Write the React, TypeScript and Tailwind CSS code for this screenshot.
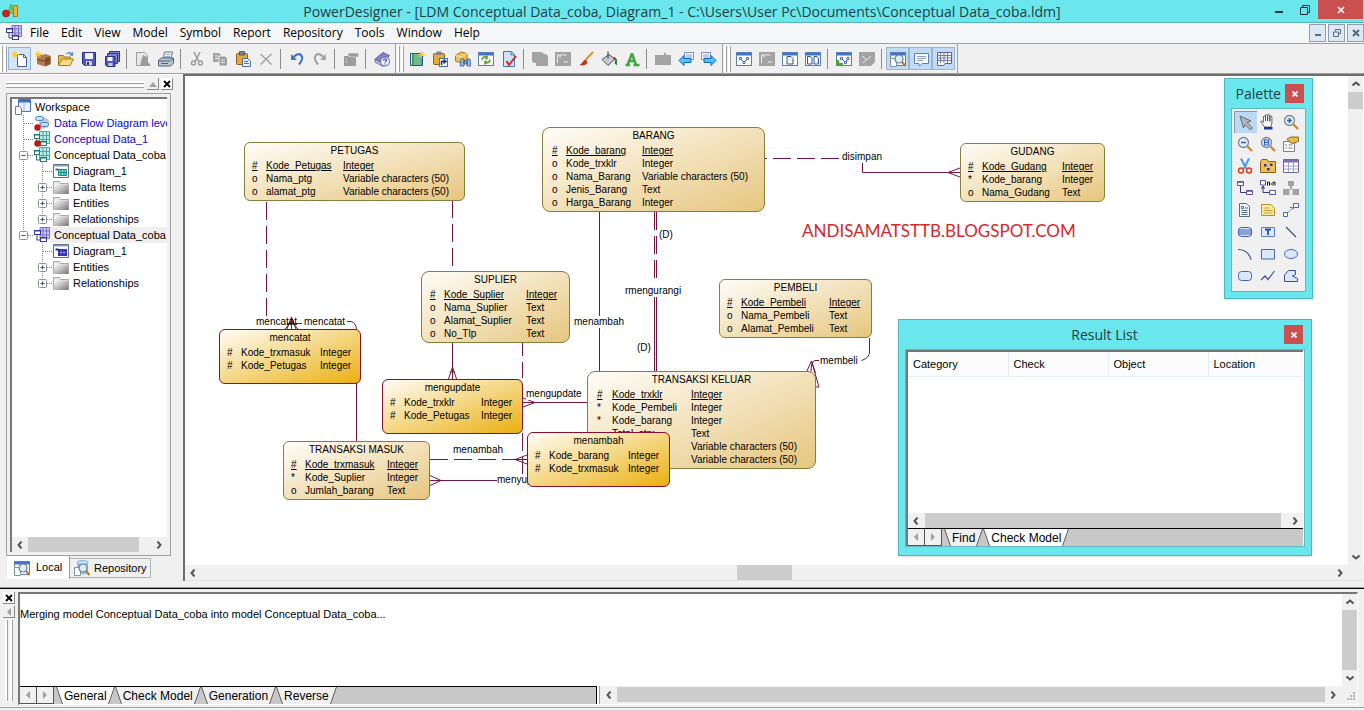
import clsx from 'clsx';
import type { ReactNode } from 'react';

interface IconProps {
  children: ReactNode;
  className?: string;
}

function Icon({ children, className }: IconProps) {
  return (
    <svg viewBox="0 0 16 16" className={clsx('size-4 shrink-0', className)} fill="none" aria-hidden="true">
      {children}
    </svg>
  );
}

/* Shared parts of the icons */

const spark = <path d="M3 0v7M0 3.500h7M.5 1l5 5M5.500 1l-5 5" stroke="#f5c431" strokeWidth="1" />;
const lens = (
  <>
    <circle cx="9" cy="8" r="4" fill="#d8ecfb" stroke="#6b7c8f" strokeWidth="1.200" />
    <path d="M12 11l3.500 4" stroke="#b5792a" strokeWidth="2.200" />
  </>
);
const windowFrame = (
  <>
    <rect x=".5" y="1.500" width="15" height="13" fill="#fff" stroke="#5b7fb5" />
    <rect x="1" y="2" width="14" height="2.500" fill="#3f74c9" />
  </>
);

const icons: Record<string, ReactNode> = {
  app: (
    <>
      <path d="M9 1l3 9H6z" fill="#7cc653" stroke="#4c8f2b" strokeWidth=".6" />
      <rect x="11.500" y="2.500" width="4" height="11" fill="#f0b32a" stroke="#a06d10" strokeWidth=".8" />
      <circle cx="4" cy="10.500" r="3.500" fill="#d6201c" stroke="#7c0c0c" strokeWidth=".6" />
    </>
  ),
  model: (
    <>
      <path d="M6 .5h9.500v11H6zM6 4h9.500M6 8h9.500M9 .5v11M12.500 .5v11" stroke="#7a72c8" fill="#c9c6f0" />
      <rect x=".5" y="3.500" width="6" height="4" fill="#fff" stroke="#3b349a" />
      <rect x="6.500" y="10.500" width="6" height="4" fill="#fff" stroke="#3b349a" />
      <path d="M1 4h5M7 11h5M3 8v5h3" stroke="#3b349a" />
    </>
  ),
  new: (
    <>
      <path d="M5.500 3.500h6l3 3v9h-9z" fill="#fff" stroke="#46607f" />
      <path d="M11.500 3.500v3h3" stroke="#46607f" />
      {spark}
    </>
  ),
  briefcase: (
    <>
      <path d="M2 5l9-2 4.500 2v8L10 15.500 2 13z" fill="#b07a50" />
      <path d="M10 7l5.500-2v8L10 15.500z" fill="#8b5230" />
      <path d="M2 8.500l8 1.500 5.500-2" stroke="#6e3d20" />
      {spark}
    </>
  ),
  open: (
    <>
      <path d="M.5 14V4.500h5l1 1.500h6v2" fill="#e9b64a" stroke="#a77a1c" />
      <path d="M.5 14.500L4 8h11.500l-3.500 6.500z" fill="#fbdc85" stroke="#a77a1c" />
      <path d="M8.500 3c2-2 4.500-2 5.500 1M14.800 1.500L14.200 4.500l-2.500-1" stroke="#4a7fc1" strokeWidth="1.200" />
    </>
  ),
  save: (
    <>
      <path d="M1.500 1.500h13v13h-11l-2-2z" fill="#5157b8" stroke="#2d3284" />
      <path d="M4 2h8v6H4z" fill="#eef2fb" />
      <path d="M5 10h6v4.500H5z" fill="#c8d0ea" />
      <path d="M6 11h2v3H6z" fill="#2d3284" />
    </>
  ),
  saveAll: (
    <>
      <path d="M5.500 .5h10v10h-10z" fill="#7f84cf" stroke="#2d3284" />
      <path d="M3.500 2.500h10v10h-10z" fill="#7f84cf" stroke="#2d3284" />
      <path d="M1.500 5.500h9.500v10h-8l-1.500-1.500z" fill="#5157b8" stroke="#2d3284" />
      <path d="M3.500 6h5v4h-5z" fill="#eef2fb" />
      <path d="M4.500 12h4v3h-4z" fill="#c8d0ea" />
    </>
  ),
  preview: (
    <>
      <path d="M1.500 1.500h8l3 3v10h-11z" fill="#e9e9e9" stroke="#9c9c9c" />
      <path d="M8 4l4 2 1 5 3 4H5l1-5z" fill="#9c9c9c" />
    </>
  ),
  print: (
    <>
      <path d="M5.500 7l1-6h8l-1.500 6z" fill="#fff" stroke="#5b6f88" />
      <path d="M7.500 3.500h5M7 5.500h5" stroke="#93a8c2" />
      <path d="M.5 9.500L3.500 7h12v5l-3 3h-12z" fill="#b9c9dc" stroke="#4f6077" />
      <path d="M1 10h11.500l3-2.500M3 12.500h7" stroke="#4f6077" />
    </>
  ),
  cut: (
    <>
      <path d="M5 1l4.500 9M11 1L6.500 10" stroke="#9c9c9c" strokeWidth="1.600" />
      <circle cx="4.500" cy="12" r="2" stroke="#9c9c9c" strokeWidth="1.400" />
      <circle cx="11.500" cy="12" r="2" stroke="#9c9c9c" strokeWidth="1.400" />
    </>
  ),
  copy: (
    <>
      <path d="M1 2h6l2 2v7H1z" fill="#a3a3a3" />
      <path d="M7 5h6l2.500 2.500V15H7z" fill="#9c9c9c" stroke="#f0f0f0" />
      <path d="M3 5h3M3 7.500h3M9 9h4M9 11.500h4" stroke="#eee" />
    </>
  ),
  paste: (
    <>
      <rect x="1.500" y="2.500" width="11" height="11" rx="1" fill="#e4a93a" stroke="#8a5f16" />
      <rect x="4.500" y=".5" width="5" height="3.500" fill="#7d828c" stroke="#4d525c" strokeWidth=".8" />
      <path d="M7.500 7.500h5l3 2.500v5.500h-8z" fill="#e9f1fc" stroke="#4f6f9e" />
      <path d="M9 10.500h4M9 12.500h5" stroke="#4f6f9e" />
    </>
  ),
  remove: <path d="M2.500 3l11 10.500M13.500 3l-11 10.500" stroke="#a3a3a3" strokeWidth="1.500" />,
  undo: (
    <>
      <path d="M2 3v6h6z" fill="#3c76d0" />
      <path d="M4 7c2-3.500 6-5 8-3s1 6-2 9.500" stroke="#3c76d0" strokeWidth="2.200" />
    </>
  ),
  redo: (
    <>
      <path d="M14 3v6H8z" fill="#a3a3a3" />
      <path d="M12 7c-2-3.500-6-5-8-3s-1 6 2 9.500" stroke="#a3a3a3" strokeWidth="2.200" />
    </>
  ),
  properties: (
    <>
      <path d="M1 5h12v10H1z" fill="#9c9c9c" />
      <path d="M5 2h10.500v4H9L5 5z" fill="#9c9c9c" stroke="#f0f0f0" strokeWidth=".6" />
      <path d="M3 8h1M3 11h1" stroke="#eee" />
    </>
  ),
  help: (
    <>
      <path d="M1 8l8-6.500 6.500 3L9 13z" fill="#8b7fc6" stroke="#5a4c9c" strokeWidth=".8" />
      <path d="M1 8v3l8 4.500V13z" fill="#c9c3e8" stroke="#5a4c9c" strokeWidth=".8" />
      <circle cx="11" cy="10.500" r="4.500" fill="#f1f5fd" stroke="#4a68a8" />
      <path d="M9.500 9.500c0-2 3-2 3-.2 0 1.200-1.500 1-1.500 2.200M11 12.500v1" stroke="#2a4c9c" strokeWidth="1.200" />
    </>
  ),
  newDiagram: (
    <>
      <path d="M1.500 2.500h12v12h-12z" fill="#3c9150" stroke="#275c8a" />
      <path d="M4.500 3h8v11h-8z" fill="#6fb98a" />
      <path d="M2.500 3v11" stroke="#d8ecf5" />
      <path d="M12.500 0v7M9 3.500h7M10 1l5 5M15 1l-5 5" stroke="#f5c431" />
    </>
  ),
  pasteLink: (
    <>
      <rect x="1.500" y="2.500" width="11" height="11" rx="1" fill="#e4a93a" stroke="#8a5f16" />
      <rect x="4.500" y=".5" width="5" height="3.500" fill="#7d828c" />
      <rect x="7.500" y="7.500" width="8" height="8" fill="#e9f1fc" stroke="#4f6f9e" />
      <path d="M9.500 14v-3.500h4M11.500 8.500l2.500 2-2.500 2" stroke="#1c2e7a" strokeWidth="1.400" />
    </>
  ),
  find: (
    <>
      <path d="M.5 4.500L6 1l6 1.500v6L6 12 .5 10z" fill="#f1bf55" stroke="#a9781d" />
      <path d="M.5 4.500L6 6l6-3.500" stroke="#fff2c4" />
      <path d="M6 8h3v7H5zM12 8h3l1 7h-4zM9 10h3v3H9z" fill="#8fb6e8" stroke="#2a4c86" strokeWidth=".7" />
    </>
  ),
  refresh: (
    <>
      {windowFrame}
      <path d="M4 9c0-3 3-4 5-3M9 4.500v3h-2M12 8.500c0 3-3 4-5 3M7 13.500v-3h2" stroke="#4fa11f" strokeWidth="1.500" />
    </>
  ),
  check: (
    <>
      <path d="M2.500 .5h8l3 3v12h-11z" fill="#cfe2f8" stroke="#4b74ad" />
      <path d="M10 1v3h3" stroke="#4b74ad" />
      <path d="M5.500 10l2.500 4 7-9" stroke="#d22a1f" strokeWidth="2" />
    </>
  ),
  grayStack: <path d="M0 1h10l2 2h2l2 2v10H4v-3H2l-2-2z" fill="#a3a3a3" />,
  grayFrame: (
    <>
      <path d="M0 1h16v14H0z" fill="#a3a3a3" />
      <path d="M2.500 12V4h9M5 4v3M10 10v2M12 10v2" stroke="#eee" />
    </>
  ),
  brush: (
    <>
      <path d="M15 1L7 9.500" stroke="#e2912a" strokeWidth="2" />
      <path d="M8 9c-3-.5-3 3-6.500 5 4 1 7.500 0 8-3z" fill="#b4391c" />
    </>
  ),
  bucket: (
    <>
      <path d="M1 8.500l7-5 6 4.500-7 6.500z" fill="#c3c7ce" stroke="#545a64" />
      <path d="M7 .5v7" stroke="#333" />
      <path d="M12 7c3 0 3.500 3 2.500 6" stroke="#c42a1c" strokeWidth="1.800" />
      <path d="M15.300 8c.6 2 .6 4 0 6" stroke="#2f8f3c" strokeWidth="1.200" />
    </>
  ),
  font: (
    <path d="M8 2.500L3.500 14M8 2.500l4 11.500M5 10h6M1.500 14h4.500M9.500 14h6" stroke="#3fa63a" strokeWidth="2.400" />
  ),
  grayNote: <path d="M0 4h9V1l3 3h4v10H0z" fill="#a3a3a3" />,
  back: (
    <>
      <rect x="6.500" y="1.500" width="9" height="7" fill="#fff" stroke="#7d92c4" />
      <path d="M8 4h6M8 6h6" stroke="#7d92c4" />
      <path d="M1 9.500l5-5v3h7v4H6v3z" fill="#4fc3f5" stroke="#1662b8" />
    </>
  ),
  forward: (
    <>
      <rect x=".5" y="1.500" width="9" height="7" fill="#fff" stroke="#7d92c4" />
      <path d="M2 4h6M2 6h6" stroke="#7d92c4" />
      <path d="M15 9.500l-5-5v3H3v4h7v3z" fill="#4fc3f5" stroke="#1662b8" />
    </>
  ),
  tree: (
    <>
      {windowFrame}
      <path d="M4.500 7.500l3.500 4M11.500 7.500L8 11.500" stroke="#2d4fa8" />
      <path d="M3.500 6.500h2v2h-2zM10.500 6.500h2v2h-2zM7 10.500h2v2H7z" fill="#fff" stroke="#4468c9" />
    </>
  ),
  page: (
    <>
      {windowFrame}
      <path d="M5 5.500h4l2 2V13H5z" fill="#f4f8ff" stroke="#34568f" />
    </>
  ),
  pages: (
    <>
      {windowFrame}
      <path d="M2.500 5.500h3l1.500 2V13H2.500zM9 5.500h3l1.500 2V13H9z" fill="#f4f8ff" stroke="#34568f" />
    </>
  ),
  addView: (
    <>
      {windowFrame}
      <path d="M5.500 7.500l4 4M12 7.500l-2.500 4" stroke="#2d4fa8" />
      <path d="M4.500 6.500h2v2h-2zM11 6.500h2v2h-2zM8.500 10.500h2v2h-2z" fill="#fff" stroke="#4468c9" />
      <path d="M0 9h3v3h4v3H3l-3-2z" fill="#45a82d" />
    </>
  ),
  grayView: (
    <>
      <path d="M0 1h16v10l-4 4H0z" fill="#a3a3a3" />
      <path d="M3 5l5 4 4-4M4 12l3-3" stroke="#eee" />
    </>
  ),
  browser: (
    <>
      {windowFrame}
      <path d="M.5 7.500h4l2 2v6h-6z" fill="#fff" stroke="#7d92a8" />
      {lens}
    </>
  ),
  output: (
    <>
      <path d="M1.500 2.500h14v10H9l-1.500 2H6v-2H1.500z" fill="#f7fafe" stroke="#5b7fb5" />
      <path d="M4 5.500h9M4 7.500h9M4 9.500h6" stroke="#8ba0cc" />
    </>
  ),
  results: (
    <>
      <path d="M1.500 1.500h14v11H9l-1.500 2H1.500z" fill="#fff" stroke="#5b5f9c" />
      <path d="M1 4.500h14M1 7h14M1 9.500h14M4.500 2v10M8 2v10M11.500 2v10" stroke="#7378b8" />
    </>
  ),
  pointer: <path d="M2 1l11 5-4 1.500 5.500 5.500-2 2L7 9.500 5.500 13z" fill="#b4b8be" stroke="#666b73" />,
  hand: (
    <>
      <path d="M4.500 13L1 8c-.5-1.500 1-1.500 2.500.5V3c0-1.500 2-1.500 2 0v4V1.500c0-1.500 2.200-1.500 2.200 0V7 1.800c0-1.500 2.200-1.500 2.200 0V7.500 3c0-1.500 2-1.500 2 0v6l-1 4z" fill="#fff" stroke="#444" strokeWidth=".8" />
      <path d="M4 13h8.500v2.500H4z" fill="#1537a8" />
    </>
  ),
  zoomIn: (
    <>
      <circle cx="6.500" cy="6.500" r="5" fill="#e3eefb" stroke="#7b8797" strokeWidth="1.300" />
      <path d="M10.500 10.500l4.500 4.500" stroke="#c68b2e" strokeWidth="2.400" />
      <path d="M4 6.500h5M6.500 4v5" stroke="#3b5f9e" strokeWidth="1.600" />
    </>
  ),
  zoomOut: (
    <>
      <circle cx="6.500" cy="6.500" r="5" fill="#e3eefb" stroke="#7b8797" strokeWidth="1.300" />
      <path d="M10.500 10.500l4.500 4.500" stroke="#c68b2e" strokeWidth="2.400" />
      <path d="M4 6.500h5" stroke="#3b5f9e" strokeWidth="1.600" />
    </>
  ),
  zoomFit: (
    <>
      <circle cx="6.500" cy="6.500" r="5" fill="#e3eefb" stroke="#7b8797" strokeWidth="1.300" />
      <path d="M10.500 10.500l4.500 4.500" stroke="#c68b2e" strokeWidth="2.400" />
      <path d="M4.500 4h4v5h-4zM4.500 6.500h4" stroke="#2b5fc4" strokeWidth="1.200" />
    </>
  ),
  propSheet: (
    <>
      <path d="M.5 5.500h11v10H.5z" fill="#fff" stroke="#7a7f87" />
      <path d="M2 9h2M2 12h2M5.500 9h4M5.500 12h4" stroke="#7a7f87" />
      <path d="M4 3l4-2h7.500v4.500L9 7.500l-3-2z" fill="#e7bd3f" stroke="#6d5412" strokeWidth=".8" />
    </>
  ),
  scissors: (
    <>
      <path d="M4 .5l5 10M12 .5l-5 10" stroke="#3f9de0" strokeWidth="2" />
      <circle cx="4" cy="12.500" r="2.500" stroke="#d8401f" strokeWidth="1.500" />
      <circle cx="12" cy="12.500" r="2.500" stroke="#d8401f" strokeWidth="1.500" />
    </>
  ),
  package: (
    <>
      <path d="M.5 3.500L2 1.500h5l1.500 2h7v11H.5z" fill="#f2bc57" stroke="#8a6013" />
      <path d="M4 6h2.500v2.500H4zM10 5.500h2.500V8H10zM7 10h2.500v2.500H7z" fill="#24408f" />
    </>
  ),
  entity: (
    <>
      <path d="M.5 1.500h15v13H.5z" fill="#fff" stroke="#6a6a98" />
      <path d="M1 2h14v2.500H1z" fill="#7d6cb8" />
      <path d="M1 8h14M1 11h14M5.500 4v10M10.500 4v10" stroke="#9aa4cc" />
    </>
  ),
  relationship: (
    <>
      <path d="M3.500 6v6.500H10" stroke="#333a78" />
      <path d="M.5 1.500h6v4h-6zM9.500 10.500h6v4h-6z" fill="#fff" stroke="#5b4fa8" />
      <path d="M1 2h5M10 11h5" stroke="#5b4fa8" strokeWidth="1.500" />
    </>
  ),
  manyToMany: (
    <>
      <path d="M3 6v6.500h7M1.500 9L3 6l1.500 3" stroke="#333a78" />
      <path d="M.5 .5h5v4.500h-5zM9.500 10.500h6v4h-6z" fill="#fff" stroke="#5b4fa8" />
      <path d="M7.500 5.500V2.200h2v3.300M10.500 4h1.500M13 5.500V2.200h2v3.300" stroke="#111" />
    </>
  ),
  inheritance: <path d="M5 1h6v5H9v3h7v6H9.500V9.500h-3V15H0V9h7V6H5z" fill="#a3a3a3" />,
  file: (
    <>
      <path d="M2.500 1.500h7l3 3v10h-10z" fill="#eef3fb" stroke="#5a6b85" />
      <path d="M4.500 4.500h2v2h-2zM8 6h3M4.500 8.500h6M4.500 10.500h6M4.500 12.500h6" stroke="#5a6b85" />
    </>
  ),
  note: (
    <>
      <path d="M1.500 2.500h9l4 4v7h-13z" fill="#fff0a8" stroke="#b8912a" />
      <path d="M3.500 6h6M3.500 8.500h9M3.500 11h9" stroke="#c59b2d" />
    </>
  ),
  link: (
    <>
      <path d="M.5 10.500h4v4h-4zM10.500 1.500h5v4h-5z" fill="#fff" stroke="#4466b0" />
      <path d="M5 10.500l5-5M7 5.500h3v3" stroke="#4466b0" strokeDasharray="2 1" />
    </>
  ),
  title: (
    <>
      <rect x="1.500" y="3.500" width="13" height="9" rx="3" fill="#dbe8fb" stroke="#3a5ba8" />
      <path d="M1 6h14M1 8h14M1 10h14" stroke="#3a5ba8" />
    </>
  ),
  textBox: (
    <>
      <path d="M1.500 3.500h13v9h-13z" fill="#dbe8fb" stroke="#5a7fc4" />
      <path d="M5 5.500h6M8 5.500v5.500" stroke="#2a4fa0" strokeWidth="1.800" />
    </>
  ),
  line: <path d="M3 3l10 10" stroke="#3a4f9c" strokeWidth="1.200" />,
  arc: <path d="M1 3.500c7 0 11 3 13 10" stroke="#3a4f8c" strokeWidth="1.200" />,
  rect: <path d="M1.500 3.500h13v9.500h-13z" fill="#dbe8fb" stroke="#4466b0" />,
  ellipse: <ellipse cx="8" cy="8" rx="6.500" ry="4.500" fill="#dbe8fb" stroke="#4466b0" />,
  rounded: <rect x="1.500" y="3.500" width="13" height="9" rx="3" fill="#dbe8fb" stroke="#4466b0" />,
  polyline: <path d="M1 12l4-4 3 3.500L14.500 3" stroke="#3a4f8c" strokeWidth="1.200" />,
  polygon: <path d="M1.500 13.500V7l4-4.500h7v4L9.500 8l5 2.500v3z" fill="#dbe8fb" stroke="#3a5090" />,
  workspace: (
    <>
      <path d="M3.500 .5h12v12h-12z" fill="#e9f1fd" stroke="#3f6fc0" />
      <path d="M4 1h11v2.500H4z" fill="#3f6fc0" />
      <path d="M9 3.500v9" stroke="#9bb7e4" />
      <path d="M.5 7.500h4l2 2v6h-6z" fill="#fff" stroke="#6c7f98" />
    </>
  ),
  flowModel: (
    <>
      <circle cx="10" cy="8" r="5.500" fill="#c3c8cf" />
      <rect x="1.500" y="1.500" width="8" height="4" rx="2" fill="#bfe0fa" stroke="#4a86c0" />
      <rect x="6.500" y="7.500" width="8" height="4" rx="2" fill="#bfe0fa" stroke="#4a86c0" />
      <circle cx="3.500" cy="12.500" r="3.200" fill="#c9100f" />
    </>
  ),
  conceptual: (
    <>
      <path d="M5.500 .5h10v12h-10zM5.500 4.500h10M5.500 8.500h10M9 .5v12M12.500 .5v12" stroke="#4aa8a0" fill="#b8efe8" />
      <rect x=".5" y="3.500" width="5" height="4" fill="#fff" stroke="#25786f" />
      <rect x="6.500" y="10.500" width="6" height="4" fill="#fff" stroke="#25786f" />
      <path d="M1 4h4M7 11h5M2.500 8v5h4" stroke="#25786f" />
    </>
  ),
  diagramTeal: (
    <>
      <path d="M.5 1.500h15v13H.5z" fill="#fff" stroke="#5b6f88" />
      <path d="M1 2h14v1.500H1z" fill="#8aa3c0" />
      <path d="M5.500 6.500h8v6h-8zM5.500 9.500h8M8 6.500v6M11 6.500v6" stroke="#19877c" fill="#7fe0d6" />
      <path d="M2.500 5.500h3v2h-3z" fill="#19877c" />
    </>
  ),
  diagramBlue: (
    <>
      <path d="M.5 1.500h15v13H.5z" fill="#fff" stroke="#5b6f88" />
      <path d="M1 2h14v1.500H1z" fill="#8aa3c0" />
      <path d="M5.500 6.500h8v6h-8z" fill="#2522a8" stroke="#2522a8" />
      <path d="M5.500 9.500h8M8 6.500v6M11 6.500v6" stroke="#a5a3f0" strokeWidth=".7" />
      <path d="M2.500 5.500h3v2h-3z" fill="#2522a8" />
    </>
  ),
  folder: (
    <>
      <defs>
        <linearGradient id="folderFill" x1="0" y1="0" x2="1" y2="1">
          <stop offset="0" stopColor="#fff" />
          <stop offset="1" stopColor="#777" />
        </linearGradient>
      </defs>
      <path d="M.5 2.500h6l1 2h8v10H.5z" fill="#e8e8e8" stroke="#aaa" />
      <path d="M1 5.500h14.500V15H1z" fill="url(#folderFill)" />
    </>
  ),
  database: (
    <>
      <path d="M3 2.500v10c0 2.500 11 2.500 11 0v-10z" fill="#8cc4ee" />
      <ellipse cx="8.500" cy="2.500" rx="5.500" ry="2" fill="#c4e3f8" stroke="#4a8fc8" strokeWidth=".6" />
      <path d="M.5 7.500h4l2 2v6h-6z" fill="#fff" stroke="#7d92a8" />
      {lens}
    </>
  ),
};

icons.conceptualLocked = (
  <>
    {icons.conceptual}
    <circle cx="3.500" cy="12.500" r="3.200" fill="#c9100f" />
  </>
);

interface ToolItem {
  icon: string;
  label: string;
  active?: 'hover' | 'pressed';
}

const toolbars: ToolItem[][][] = [
  [
    [
      { icon: 'new', label: 'New', active: 'hover' },
      { icon: 'briefcase', label: 'New project' },
      { icon: 'open', label: 'Open' },
      { icon: 'save', label: 'Save' },
      { icon: 'saveAll', label: 'Save all' },
    ],
    [
      { icon: 'preview', label: 'Print preview' },
      { icon: 'print', label: 'Print' },
    ],
    [
      { icon: 'cut', label: 'Cut' },
      { icon: 'copy', label: 'Copy' },
      { icon: 'paste', label: 'Paste' },
      { icon: 'remove', label: 'Delete' },
    ],
    [
      { icon: 'undo', label: 'Undo' },
      { icon: 'redo', label: 'Redo' },
    ],
    [{ icon: 'properties', label: 'Properties' }],
    [{ icon: 'help', label: 'Help topics' }],
  ],
  [
    [
      { icon: 'newDiagram', label: 'New diagram' },
      { icon: 'pasteLink', label: 'Paste as shortcut' },
      { icon: 'find', label: 'Find objects' },
      { icon: 'refresh', label: 'Refresh' },
      { icon: 'check', label: 'Run check' },
    ],
    [
      { icon: 'grayStack', label: 'Group' },
      { icon: 'grayFrame', label: 'Ungroup' },
      { icon: 'brush', label: 'Line style' },
      { icon: 'bucket', label: 'Fill' },
      { icon: 'font', label: 'Font' },
    ],
    [
      { icon: 'grayNote', label: 'Up one level' },
      { icon: 'back', label: 'Previous diagram' },
      { icon: 'forward', label: 'Next diagram' },
    ],
  ],
  [
    [
      { icon: 'tree', label: 'Global view' },
      { icon: 'grayFrame', label: 'Selection view' },
      { icon: 'page', label: 'Page view' },
      { icon: 'pages', label: 'Used pages' },
    ],
    [
      { icon: 'addView', label: 'Add view' },
      { icon: 'grayView', label: 'Previous view' },
    ],
    [
      { icon: 'browser', label: 'Browser', active: 'pressed' },
      { icon: 'output', label: 'Output', active: 'pressed' },
      { icon: 'results', label: 'Result list', active: 'pressed' },
    ],
  ],
];

const paletteTools = [
  'pointer', 'hand', 'zoomIn',
  'zoomOut', 'zoomFit', 'propSheet',
  'scissors', 'package', 'entity',
  'relationship', 'manyToMany', 'inheritance',
  'file', 'note', 'link',
  'title', 'textBox', 'line',
  'arc', 'rect', 'ellipse',
  'rounded', 'polyline', 'polygon',
];

const menus = ['File', 'Edit', 'View', 'Model', 'Symbol', 'Report', 'Repository', 'Tools', 'Window', 'Help'];

interface TreeItem {
  label: string;
  icon: string;
  depth: number;
  expander?: 'plus' | 'minus';
  last?: boolean;
  parentLine?: boolean;
  blue?: boolean;
  selected?: boolean;
}

const treeItems: TreeItem[] = [
  { label: 'Workspace', icon: 'workspace', depth: 0 },
  { label: 'Data Flow Diagram leve', icon: 'flowModel', depth: 1, blue: true },
  { label: 'Conceptual Data_1', icon: 'conceptualLocked', depth: 1, blue: true },
  { label: 'Conceptual Data_coba', icon: 'conceptual', depth: 1, expander: 'minus' },
  { label: 'Diagram_1', icon: 'diagramTeal', depth: 2, parentLine: true },
  { label: 'Data Items', icon: 'folder', depth: 2, expander: 'plus', parentLine: true },
  { label: 'Entities', icon: 'folder', depth: 2, expander: 'plus', parentLine: true },
  { label: 'Relationships', icon: 'folder', depth: 2, expander: 'plus', parentLine: true, last: true },
  { label: 'Conceptual Data_coba', icon: 'model', depth: 1, expander: 'minus', last: true, selected: true },
  { label: 'Diagram_1', icon: 'diagramBlue', depth: 2 },
  { label: 'Entities', icon: 'folder', depth: 2, expander: 'plus' },
  { label: 'Relationships', icon: 'folder', depth: 2, expander: 'plus', last: true },
];

interface EntityData {
  name: string;
  place: string;
  columns: string;
  association?: boolean;
  rows: [string, string, string][];
}

const entities: EntityData[] = [
  {
    name: 'PETUGAS',
    place: 'left-[59px] top-[66px] w-[221px] rounded-md',
    columns: 'pl-[7px] grid-cols-[14px_77px_auto]',
    rows: [
      ['#', 'Kode_Petugas', 'Integer'],
      ['o', 'Nama_ptg', 'Variable characters (50)'],
      ['o', 'alamat_ptg', 'Variable characters (50)'],
    ],
  },
  {
    name: 'BARANG',
    place: 'left-[357px] top-[51px] w-[223px] rounded-lg',
    columns: 'pl-[9px] grid-cols-[14px_76px_auto]',
    rows: [
      ['#', 'Kode_barang', 'Integer'],
      ['o', 'Kode_trxklr', 'Integer'],
      ['o', 'Nama_Barang', 'Variable characters (50)'],
      ['o', 'Jenis_Barang', 'Text'],
      ['o', 'Harga_Barang', 'Integer'],
    ],
  },
  {
    name: 'GUDANG',
    place: 'left-[775px] top-[67px] w-[145px] rounded-md',
    columns: 'pl-[7px] grid-cols-[14px_80px_auto]',
    rows: [
      ['#', 'Kode_Gudang', 'Integer'],
      ['*', 'Kode_barang', 'Integer'],
      ['o', 'Nama_Gudang', 'Text'],
    ],
  },
  {
    name: 'SUPLIER',
    place: 'left-[236px] top-[195px] w-[149px] rounded-lg',
    columns: 'pl-2 grid-cols-[14px_82px_auto]',
    rows: [
      ['#', 'Kode_Suplier', 'Integer'],
      ['o', 'Nama_Suplier', 'Text'],
      ['o', 'Alamat_Suplier', 'Text'],
      ['o', 'No_Tlp', 'Text'],
    ],
  },
  {
    name: 'PEMBELI',
    place: 'left-[534px] top-[203px] w-[153px] rounded-md',
    columns: 'pl-[7px] grid-cols-[14px_88px_auto]',
    rows: [
      ['#', 'Kode_Pembeli', 'Integer'],
      ['o', 'Nama_Pembeli', 'Text'],
      ['o', 'Alamat_Pembeli', 'Text'],
    ],
  },
  {
    name: 'TRANSAKSI MASUK',
    place: 'left-[98px] top-[365px] w-[147px] rounded-md',
    columns: 'pl-[7px] grid-cols-[14px_82px_auto]',
    rows: [
      ['#', 'Kode_trxmasuk', 'Integer'],
      ['*', 'Kode_Suplier', 'Integer'],
      ['o', 'Jumlah_barang', 'Text'],
    ],
  },
  {
    name: 'TRANSAKSI KELUAR',
    place: 'left-[402px] top-[295px] w-[229px] rounded-lg',
    columns: 'pl-[9px] grid-cols-[15px_79px_auto]',
    rows: [
      ['#', 'Kode_trxklr', 'Integer'],
      ['*', 'Kode_Pembeli', 'Integer'],
      ['*', 'Kode_barang', 'Integer'],
      ['', 'Total_strx', 'Text'],
      ['', '', 'Variable characters (50)'],
      ['', '', 'Variable characters (50)'],
    ],
  },
  {
    name: 'mencatat',
    place: 'left-[34px] top-[253px] w-[142px] rounded-md',
    columns: 'pl-[7px] grid-cols-[14px_79px_auto]',
    association: true,
    rows: [
      ['#', 'Kode_trxmasuk', 'Integer'],
      ['#', 'Kode_Petugas', 'Integer'],
    ],
  },
  {
    name: 'mengupdate',
    place: 'left-[197px] top-[303px] w-[141px] rounded-md',
    columns: 'pl-[7px] grid-cols-[14px_77px_auto]',
    association: true,
    rows: [
      ['#', 'Kode_trxklr', 'Integer'],
      ['#', 'Kode_Petugas', 'Integer'],
    ],
  },
  {
    name: 'menambah',
    place: 'left-[342px] top-[356px] w-[143px] rounded-md',
    columns: 'pl-[7px] grid-cols-[14px_79px_auto]',
    association: true,
    rows: [
      ['#', 'Kode_barang', 'Integer'],
      ['#', 'Kode_trxmasuk', 'Integer'],
    ],
  },
];

const relationLabels = [
  { text: 'mencatat', place: 'left-[71px] top-[240px]' },
  { text: 'mencatat', place: 'left-[119px] top-[240px] bg-white' },
  { text: 'menambah', place: 'left-[389px] top-[240px] bg-white' },
  { text: '(D)', place: 'left-[474px] top-[153px]' },
  { text: 'rmengurangi', place: 'left-[440px] top-[209px] bg-white' },
  { text: '(D)', place: 'left-[452px] top-[266px]' },
  { text: 'disimpan', place: 'left-[657px] top-[75px] bg-white' },
  { text: 'membeli', place: 'left-[635px] top-[279px] bg-white' },
  { text: 'mengupdate', place: 'left-[341px] top-[312px] bg-white' },
  { text: 'menambah', place: 'left-[268px] top-[368px]' },
  { text: 'menyuplai', place: 'left-[312px] top-[398px] bg-white' },
];

function Chevron({ turn }: { turn: string }) {
  return (
    <svg viewBox="0 0 8 8" className={clsx('size-2 shrink-0', turn)} fill="none" aria-hidden="true">
      <path d="M5.500 .5L2.500 4l3 3.500" stroke="#555" strokeWidth="2" />
    </svg>
  );
}

interface ScrollbarProps {
  before: string;
  thumb: string;
  after: string;
  vertical?: boolean;
  className?: string;
}

function Scrollbar({ before, thumb, after, vertical, className }: ScrollbarProps) {
  const arrow = clsx('flex shrink-0 items-center justify-center', vertical ? 'h-4 w-full' : 'h-full w-4');
  return (
    <div className={clsx('flex shrink-0 bg-[#f0f0f0]', vertical ? 'w-[15px] flex-col' : 'h-[15px]', className)}>
      <button type="button" aria-label={vertical ? 'Scroll up' : 'Scroll left'} className={arrow}>
        <Chevron turn={vertical ? 'rotate-90' : 'rotate-0'} />
      </button>
      <div className={before} />
      <div className={clsx('bg-[#cdcdcd]', thumb)} />
      <div className={after} />
      <button type="button" aria-label={vertical ? 'Scroll down' : 'Scroll right'} className={arrow}>
        <Chevron turn={vertical ? '-rotate-90' : 'rotate-180'} />
      </button>
    </div>
  );
}

function TitleBar() {
  return (
    <header className="flex h-[23px] items-start border-b border-[#55b4b8] bg-[#6ae7ec]">
      <div className="w-[124px] pt-[3px] pl-0.5">
        <Icon>{icons.app}</Icon>
      </div>
      <h1 className="flex-1 truncate text-center font-['Open_Sans',sans-serif] text-sm leading-6 text-[#1c3f44]">
        PowerDesigner - [LDM Conceptual Data_coba, Diagram_1 - C:\Users\User Pc\Documents\Conceptual Data_coba.ldm]
      </h1>
      <div className="flex w-[124px] justify-end">
        <button type="button" aria-label="Minimize" className="flex h-[19px] w-[26px] items-center justify-center">
          <span className="mt-1 h-0.5 w-2 bg-[#1b3436]" />
        </button>
        <button type="button" aria-label="Restore" className="flex h-[19px] w-[26px] items-center justify-center">
          <svg viewBox="0 0 10 10" className="size-2.5" fill="none">
            <path d="M2.500 2V.5h7v7H8" stroke="#1b3436" />
            <path d="M.5 2.500h7v7h-7z" stroke="#1b3436" />
          </svg>
        </button>
        <button type="button" aria-label="Close" className="mr-px flex h-[19px] w-[45px] items-center justify-center bg-[#c9504f]">
          <svg viewBox="0 0 8 8" className="size-2" fill="none">
            <path d="M1 1l6 6M7 1L1 7" stroke="#fff" strokeWidth="1.600" />
          </svg>
        </button>
      </div>
    </header>
  );
}

function MenuBar() {
  const box = 'flex h-[18px] w-[17px] items-center justify-center border border-[#8f9fae] bg-[#dce8f5]';
  return (
    <nav className="flex h-[21px] items-center border-b border-[#a0a0a0] bg-[#f5f6f8]">
      <Icon className="mr-0.5 ml-1.5">{icons.model}</Icon>
      <div className="flex flex-1">
        {menus.map(menu => (
          <button key={menu} type="button" className="px-1.5 font-['Open_Sans',sans-serif] text-xs text-black">
            {menu}
          </button>
        ))}
      </div>
      <div className="flex gap-0.5">
        <button type="button" aria-label="Minimize document" className={box}>
          <span className="mt-1 h-0.5 w-1.5 bg-[#5b6a7a]" />
        </button>
        <button type="button" aria-label="Restore document" className={box}>
          <svg viewBox="0 0 8 8" className="size-2" fill="none">
            <path d="M2.500 2.500v-2h5v4h-2M.5 3h5v4.500h-5z" stroke="#5b6a7a" />
          </svg>
        </button>
        <button type="button" aria-label="Close document" className={box}>
          <svg viewBox="0 0 8 8" className="size-2" fill="none">
            <path d="M1 1l6 6M7 1L1 7" stroke="#5b6a7a" strokeWidth="2" />
          </svg>
        </button>
      </div>
    </nav>
  );
}

function Toolbar() {
  return (
    <div className="flex h-[30px] border-b border-[#a0a0a0] bg-[#f0f0f0]">
      {toolbars.map((groups, bandIndex) => (
        <div key={bandIndex} className="mr-px flex items-center border-r border-[#a0a0a0] pr-0.5">
          <span className="mr-px h-[26px] w-[3px] border-r border-[#a0a0a0] bg-white" />
          <span className="mr-px h-[26px] w-[3px] border-r border-[#a0a0a0] bg-white" />
          {groups.map((group, groupIndex) => (
            <div key={groupIndex} className="flex items-center">
              {groupIndex > 0 && <span className="mr-1 ml-[3px] h-5 w-px bg-[#8c8c8c]" />}
              {group.map(tool => (
                <button
                  key={tool.label}
                  type="button"
                  aria-label={tool.label}
                  className={clsx(
                    'flex h-[23px] w-[23px] items-center justify-center border',
                    !tool.active && 'border-transparent',
                    tool.active === 'hover' && 'border-[#8cb4dc] bg-[#d3e5f7]',
                    tool.active === 'pressed' && 'border-[#9db4cc] bg-[#c0dbf5]',
                  )}
                >
                  <Icon>{icons[tool.icon]}</Icon>
                </button>
              ))}
            </div>
          ))}
        </div>
      ))}
    </div>
  );
}

function Branch({ expander, last, lineOnly, hidden }: { expander?: string; last?: boolean; lineOnly?: boolean; hidden?: boolean }) {
  return (
    <svg viewBox="0 0 19 16" className="h-4 w-[19px] shrink-0" fill="none" aria-hidden="true">
      {!hidden && <path d={last ? 'M8.500 0v8' : 'M8.500 0v16'} stroke="#888" strokeDasharray="1 1" />}
      {!lineOnly && !hidden && <path d="M9 8.500h10" stroke="#888" strokeDasharray="1 1" />}
      {expander && (
        <>
          <rect x="4.500" y="4.500" width="8" height="8" rx="1" fill="#fff" stroke="#919191" />
          <path d="M6.500 8.500h4" stroke="#3a4f9c" />
          {expander === 'plus' && <path d="M8.500 6.500v4" stroke="#3a4f9c" />}
        </>
      )}
    </svg>
  );
}

function Browser() {
  return (
    <aside className="flex w-[183px] shrink-0 flex-col border-t border-white">
      <div className="flex h-[18px] items-center pr-2.5 pl-1.5">
        <div className="flex flex-1 flex-col gap-px">
          <span className="h-[3px] border-b border-[#a0a0a0] bg-white" />
          <span className="h-[3px] border-b border-[#a0a0a0] bg-white" />
        </div>
        <button type="button" aria-label="Collapse browser" className="ml-[3px] flex h-3 w-3 items-end justify-center border-r border-b border-[#888]">
          <svg viewBox="0 0 8 8" className="size-2"><path d="M4 1l4 5H0z" fill="#a0a0a0" /></svg>
        </button>
        <button type="button" aria-label="Close browser" className="ml-0.5 flex h-3 w-3 items-center justify-center border-r border-b border-[#888] bg-white">
          <svg viewBox="0 0 8 8" className="size-2"><path d="M1 1l6 6M7 1L1 7" stroke="#000" strokeWidth="1.800" /></svg>
        </button>
      </div>
      <div className="mr-3 ml-1.5 flex min-h-0 flex-1 flex-col border border-[#a0a0a0] p-[3px]">
        <div className="flex min-h-0 flex-1 flex-col border-t-2 border-l-2 border-[#777] bg-white">
          <ul className="min-h-0 flex-1 overflow-hidden pl-[3px] font-['Liberation_Sans',sans-serif] text-[11px] text-black">
            {treeItems.map((item, index) => (
              <li key={index} className="flex h-4 items-center">
                {item.depth === 2 && <Branch lineOnly hidden={!item.parentLine} />}
                {item.depth > 0 && <Branch expander={item.expander} last={item.last} />}
                <Icon>{icons[item.icon]}</Icon>
                <span
                  className={clsx(
                    'flex-1 pl-1 leading-4 whitespace-nowrap',
                    item.blue && 'text-[#1400c8]',
                    item.selected && 'bg-[#efefef]',
                  )}
                >
                  {item.label}
                </span>
              </li>
            ))}
          </ul>
          <Scrollbar before="w-0" thumb="w-[111px]" after="flex-1" />
        </div>
      </div>
      <div className="mb-0.5 ml-[7px] flex h-[23px] items-start font-['Liberation_Sans',sans-serif] text-[11px]">
        <button type="button" className="flex h-[23px] w-[63px] items-center gap-1.5 border-r border-[#a0a0a0] bg-white pl-[7px]">
          <Icon>{icons.browser}</Icon>
          Local
        </button>
        <button type="button" className="mt-0.5 flex h-5 w-[81px] items-center gap-1 border border-l-0 border-[#b4b4b4] pl-1">
          <Icon>{icons.database}</Icon>
          Repository
        </button>
      </div>
    </aside>
  );
}

function Entity({ name, place, columns, association, rows }: EntityData) {
  return (
    <section
      className={clsx(
        'absolute border bg-linear-to-br/srgb from-[#fffdf8]',
        place,
        association ? 'border-[#85102f] to-[#eab010] pb-[11px]' : 'border-[#83803f] to-[#e6c67e] pb-0.5',
      )}
    >
      <h2 className="h-4 text-center leading-4">{name}</h2>
      {rows.map(([mark, column, type], index) => (
        <div
          key={index}
          className={clsx('grid h-[13px] leading-[13px] whitespace-nowrap', columns, index === 0 && !association && 'underline')}
        >
          <span className="justify-self-start">{mark}</span>
          <span className="justify-self-start">{column}</span>
          <span className="justify-self-start">{type}</span>
        </div>
      ))}
    </section>
  );
}

function Relations() {
  return (
    <svg className="absolute top-0 left-0 h-[450px] w-[950px]" viewBox="185 76 950 450" fill="none" stroke="#701545" aria-hidden="true">
      <path d="M266.500 202v114M452.500 200v72M522.500 338v40M522.500 433v45" strokeDasharray="18 6" />
      <path d="M654.500 212v72M656.500 212v72" strokeDasharray="18 6" />
      <path d="M654.500 297v75M656.500 297v75" />
      <path d="M599.500 212v160M356.500 383v58M452.500 342v37" />
      <path d="M448.500 379l4-12 4 12M450 372h5" />
      {/* mencatat */}
      <path d="M291.500 317l-4.500 12M291.500 317l4.500 12M291.500 317v12M285 329l6-7M298 329l-6-7" />
      <path d="M287 323.500h15M347 321.500h4q5 1 5.500 8" />
      {/* mengupdate */}
      <path d="M523 402.500h64M523 398l12 4.500-12 4.500" />
      {/* menambah */}
      <path d="M430 459.500h85" strokeDasharray="18 6" />
      <path d="M506 459.500h21M527 455l-12 4.500 12 4.500" />
      <path d="M430 480.500h67M430 475.500l11 5-11 5" />
      {/* disimpan */}
      <path d="M749 158.500h92" strokeDasharray="18 6" />
      <path d="M862.500 163v9.500H960M960 168l-12 4.500 12 4.500" />
      {/* membeli */}
      <path d="M869.500 338v14q0 6-8 8.500M819 360.500h-4q-4 1-4 11M811.500 361l-5 11M811.500 361l7.500 26h-5M811.500 361l4 12" />
    </svg>
  );
}

function CloseButton({ label }: { label: string }) {
  return (
    <button type="button" aria-label={label} className="flex h-[19px] w-[19px] items-center justify-center bg-[#c9504f]">
      <svg viewBox="0 0 6 6" className="size-1.5" fill="none">
        <path d="M.5 .5l5 5M5.500 .5l-5 5" stroke="#fff" strokeWidth="1.600" />
      </svg>
    </button>
  );
}

function Palette() {
  return (
    <section className="absolute top-0.5 right-[35px] w-[89px] border border-[#4fb5ba] bg-[#6ae7ec] px-1.5 pb-1.5 shadow">
      <div className="flex h-[29px] items-center justify-end gap-1 pr-0.5">
        <h2 className="font-['Open_Sans',sans-serif] text-sm text-[#1c3f44]">Palette</h2>
        <CloseButton label="Close palette" />
      </div>
      <div className="grid grid-cols-3 border border-[#62b9bd] bg-[#f0f0f0] pt-0.5 pr-[3px] pb-1 pl-0.5">
        {paletteTools.map((tool, index) => (
          <button
            key={tool}
            type="button"
            aria-label={tool}
            className={clsx(
              'flex h-[22px] items-center justify-center',
              index === 0 && 'border-t border-l border-[#8c98a4] bg-[#bcd8f2]',
            )}
          >
            <Icon>{icons[tool]}</Icon>
          </button>
        ))}
      </div>
    </section>
  );
}

interface SheetTabsProps {
  tabs: string[];
  active: string;
  className?: string;
}

function SheetTabs({ tabs, active, className }: SheetTabsProps) {
  const nav = 'flex h-full w-[17px] items-center justify-center border-r border-b border-[#555] bg-[#f0f0f0]';
  return (
    <div className={clsx("flex h-[18px] border-t border-black bg-[#c8c8c8] font-['Liberation_Sans',sans-serif] text-xs text-black", className)}>
      <button type="button" aria-label="Previous tab" className={nav}>
        <svg viewBox="0 0 8 8" className="size-2"><path d="M6 0v8L2 4z" fill="#a0a0a0" /></svg>
      </button>
      <button type="button" aria-label="Next tab" className={nav}>
        <svg viewBox="0 0 8 8" className="size-2"><path d="M2 0v8l4-4z" fill="#a0a0a0" /></svg>
      </button>
      <div className="flex pl-0.5">
        {tabs.map(tab => {
          const fill = tab === active ? '#fff' : '#f0f0f0';
          return (
            <button key={tab} type="button" className="flex h-[17px] items-center">
              <svg viewBox="0 0 7 17" className="h-[17px] w-[7px]" aria-hidden="true">
                <path d="M0 0h7v17h-1z" fill={fill} />
                <path d="M.5 0l6 17" stroke="#555" fill="none" />
              </svg>
              <span className={clsx('flex h-full items-center px-px', tab === active ? 'bg-white' : 'bg-[#f0f0f0]')}>{tab}</span>
              <svg viewBox="0 0 7 17" className="h-[17px] w-[7px]" aria-hidden="true">
                <path d="M0 0h7L1 17H0z" fill={fill} />
                <path d="M6.500 0l-6 17" stroke="#555" fill="none" />
              </svg>
            </button>
          );
        })}
      </div>
    </div>
  );
}

function ResultList() {
  return (
    <section className="absolute top-[243px] right-9 flex h-[237px] w-[414px] flex-col border border-[#4fb5ba] bg-[#6ae7ec] px-1.5 pb-2 shadow">
      <div className="flex h-[29px] items-center justify-end pr-0.5">
        <h2 className="flex-1 pl-5 text-center font-['Open_Sans',sans-serif] text-sm text-[#1c3f44]">Result List</h2>
        <CloseButton label="Close result list" />
      </div>
      <div className="flex flex-1 flex-col border border-[#62b9bd] bg-white pr-px">
        <div className="flex flex-1 flex-col border-t-2 border-l-2 border-[#777]">
          <table className="w-full table-fixed font-['Liberation_Sans',sans-serif] text-[11px] text-black">
            <thead>
              <tr className="h-6 border-b border-[#e3edf7] bg-[#fcfcfc]">
                <th className="w-[100px] border-r border-[#e3edf7] pl-[5px] text-left font-normal">Category</th>
                <th className="w-[100px] border-r border-[#e3edf7] pl-[5px] text-left font-normal">Check</th>
                <th className="w-[100px] border-r border-[#e3edf7] pl-[5px] text-left font-normal">Object</th>
                <th className="pl-[5px] text-left font-normal">Location</th>
              </tr>
            </thead>
          </table>
          <div className="flex-1" />
          <Scrollbar before="w-px" thumb="flex-1" after="w-1.5" />
          <SheetTabs tabs={['Find', 'Check Model']} active="Check Model" />
        </div>
      </div>
    </section>
  );
}

function DiagramCanvas() {
  return (
    <main className="flex min-w-0 flex-1 flex-col border-t-2 border-l-2 border-[#6d6d6d] bg-white">
      <div className="flex min-h-0 flex-1">
        <div className="relative min-w-0 flex-1 font-['Liberation_Sans',sans-serif] text-[10px] text-black">
          <div className="absolute inset-0 overflow-hidden">
            <Relations />
            {relationLabels.map((label, index) => (
              <span key={index} className={clsx('absolute leading-3 whitespace-nowrap', label.place)}>
                {label.text}
              </span>
            ))}
            {entities.map(entity => (
              <Entity key={entity.name} {...entity} />
            ))}
            <p className="absolute top-[143px] left-[617px] font-['Lato',sans-serif] text-[17px] leading-6 whitespace-nowrap text-[#d3282d]">
              ANDISAMATSTTB.BLOGSPOT.COM
            </p>
          </div>
          <Palette />
          <ResultList />
        </div>
        <Scrollbar vertical before="h-0" thumb="h-[17px]" after="flex-1" className="mr-px" />
      </div>
      <div className="flex border-b border-[#e3e3e3] bg-[#f0f0f0]">
        <Scrollbar className="h-4 flex-1" before="flex-[535]" thumb="w-[55px]" after="flex-[540]" />
        <span className="w-4" />
      </div>
    </main>
  );
}

function OutputPanel() {
  return (
    <footer className="flex border-t border-[#a0a0a0] bg-[#f0f0f0]">
      <div className="flex flex-1 flex-col border-t border-black pt-[3px]">
        <div className="flex">
          <div className="flex w-[18px] flex-col items-center gap-0.5 pb-1">
            <button type="button" aria-label="Close output" className="flex h-3 w-3 items-center justify-center border-r border-b border-[#888] bg-white">
              <svg viewBox="0 0 8 8" className="size-2"><path d="M1 1l6 6M7 1L1 7" stroke="#000" strokeWidth="1.800" /></svg>
            </button>
            <button type="button" aria-label="Collapse output" className="flex h-3 w-3 items-center justify-center border-r border-b border-[#888]">
              <svg viewBox="0 0 8 8" className="size-2"><path d="M6 0v8L2 4z" fill="#a0a0a0" /></svg>
            </button>
            <div className="flex flex-1 gap-0.5">
              <span className="w-[3px] border-r border-[#a0a0a0] bg-white" />
              <span className="w-[3px] border-r border-[#a0a0a0] bg-white" />
            </div>
          </div>
          <div className="mr-1.5 flex flex-1 flex-col border-t-2 border-r border-b border-l-2 border-t-[#777] border-r-white border-b-white border-l-[#777]">
            <div className="flex h-[92px] bg-white">
              <p className="flex-1 pt-3 font-['Liberation_Sans',sans-serif] text-[11px] leading-4 text-black">
                Merging model Conceptual Data_coba into model Conceptual Data_coba...
              </p>
              <Scrollbar vertical before="h-0" thumb="h-[60px]" after="flex-1" />
            </div>
            <div className="flex">
              <SheetTabs tabs={['General', 'Check Model', 'Generation', 'Reverse']} active="General" className="w-[577px] shrink-0 border-r" />
              <span className="mr-px w-[3px] border-r border-[#a0a0a0] bg-white" />
              <Scrollbar className="mt-px h-4 flex-1" before="w-0" thumb="flex-1" after="w-0" />
              <svg viewBox="0 0 16 16" className="size-4" fill="#b8b8b8" aria-hidden="true">
                <path d="M12 6h2v2h-2zM9 9h2v2H9zM12 9h2v2h-2zM6 12h2v2H6zM9 12h2v2H9zM12 12h2v2h-2z" />
              </svg>
            </div>
          </div>
        </div>
        <div className="mt-0.5 mb-px h-0.5 border-t border-[#a0a0a0]" />
        <div className="h-px bg-[#d8d8d8]" />
      </div>
    </footer>
  );
}

function App() {
  return (
    <div className="flex h-screen flex-col overflow-hidden bg-[#f0f0f0]">
      <TitleBar />
      <MenuBar />
      <Toolbar />
      <div className="flex min-h-0 flex-1 pb-1.5">
        <Browser />
        <DiagramCanvas />
      </div>
      <OutputPanel />
    </div>
  );
}

export default App;
